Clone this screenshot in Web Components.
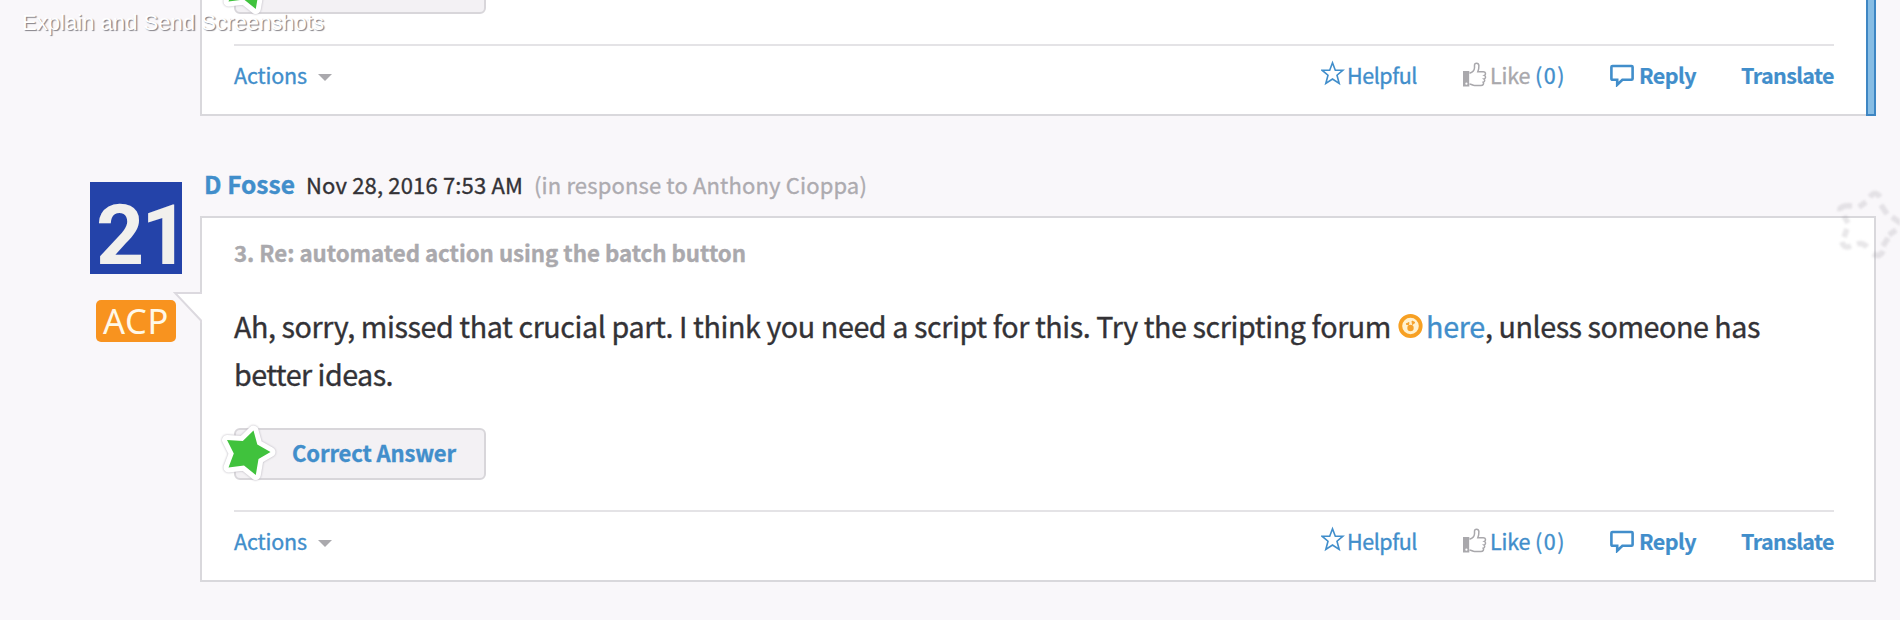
<!DOCTYPE html>
<html lang="en"><head><meta charset="utf-8"><title>Discussion</title>
<style>
html,body{margin:0;height:620px;overflow:hidden;background:#f9f7fa}
body{font-family:"Noto Sans CJK SC","Noto Sans",sans-serif;color:#333236}
</style></head><body>
<discussion-page></discussion-page>
<script>
const define=(name,html,init)=>customElements.define(name,class extends HTMLElement{
  connectedCallback(){
    if(this.shadowRoot)return;
    const t=document.createElement('template');t.innerHTML=html;
    this.attachShadow({mode:'open'}).append(t.content.cloneNode(true));
    if(init)init(this,this.shadowRoot);
  }
});

/* one line of text tracked to fill a given width */
define('tracked-text',`<style>:host{display:inline-block;white-space:pre;-webkit-text-stroke:var(--weight,.35px)}span{display:inline-block}</style><span><slot></slot></span>`,(el,root)=>{
  const s=root.querySelector('span'),w=+el.getAttribute('width');
  const n=el.textContent.length,nat=s.getBoundingClientRect().width;
  s.style.letterSpacing=((w-nat)/n)+'px';
  el.style.width=w+'px';
});

define('icon-star',`<style>:host{display:block;width:24px;height:26px}svg{display:block}</style>
<svg width="24" height="26" viewBox="0 0 24 26" fill="none" stroke="#418ecb" stroke-width="1.6"><path d="M11.5 2.8 14.3 10.2H22L16 15.2 18.2 23.5 11.5 19 4.8 23.5 7 15.2 1 10.2H8.7Z"/></svg>`);
define('icon-thumb',`<style>:host{display:block;width:24px;height:26px}svg{display:block}</style>
<svg width="24" height="26" viewBox="0 0 24 26"><path d="M0 10H6.3V25.5H0Z" fill="#a9a8ac"/><circle cx="3.4" cy="22.7" r="1.1" fill="#fff"/><path d="M6.5 12.3C9 11.5 11.3 9.3 11.5 7V4.2C11.6 1.6 15.6 1.4 15.9 4.6 16 7 15.5 8.8 14.8 10.7H20.3C22.8 10.7 23.3 13.6 21.3 14.4 23.3 15.2 22.7 17.8 20.9 18 22.3 19 21.7 21 20.2 21.3 21.2 22.8 20 24.5 18 24.5H11.5C9.5 24.5 8.5 23 6.5 23" fill="#fff" stroke="#a9a8ac" stroke-width="1.5"/></svg>`);
define('icon-reply',`<style>:host{display:block;width:24px;height:26px}svg{display:block}</style>
<svg width="24" height="26" viewBox="0 0 24 26"><path d="M2.5 5H21.5Q22.6 5 22.6 6.1V17.7Q22.6 18.8 21.5 18.8H12.4L7.2 23.8V18.8H2.5Q1.4 18.8 1.4 17.7V6.1Q1.4 5 2.5 5Z" fill="none" stroke="#418ecb" stroke-width="2.6"/></svg>`);
define('icon-forum',`<style>:host{display:inline-block;width:25px;height:28px;vertical-align:-4px}svg{display:block}</style>
<svg width="25" height="28" viewBox="0 0 25 28"><circle cx="12.5" cy="14" r="10.2" fill="#fff1cf" stroke="#f7a023" stroke-width="3.8"/><circle cx="12.5" cy="16" r="3.2" fill="#f5a12b"/><path d="M8 12 11 10.5 10.5 13ZM14 9 17 10.5 14.5 12.5Z" fill="#f5a12b" stroke="#f5a12b"/></svg>`);
define('correct-star',`<style>:host{display:block;width:64px;height:70px}svg{display:block;filter:drop-shadow(0 0 1.2px #b5b1ba)}</style>
<svg width="64" height="70" viewBox="0 0 64 70"><path d="M37.5 14.5 41.3 28.5 54.5 36 42.5 43 39.8 59 28 49.5 12.5 51.5 17.8 37.5 11 24 26.8 25Z" fill="#40c23d" stroke="#fff" stroke-width="10" stroke-linejoin="round" paint-order="stroke"/></svg>`);
define('ghost-star',`<style>:host{display:block;width:70px;height:80px}svg{display:block;filter:blur(.8px)}</style>
<svg width="70" height="80" viewBox="0 0 70 80"><path d="M10 26Q9 20 22 21M29 22 36 17M40 12Q45 5 50 12M51 20 57 29M62 32 72 39M66 45 59 50M58 53 53 61M53 66Q50 73 43 69M37 62Q33 57 27 59M21 61Q14 64 12 57M14 52 17 44M18 38 14 31" fill="none" stroke="#a09ca5" stroke-opacity=".24" stroke-width="5.5"/></svg>`);

define('correct-button',`<style>
:host{display:flex;box-sizing:border-box;position:relative;width:252px;height:52px;border:2px solid #d8d6da;border-radius:6px;background:#f3f1f4;padding-left:56px;font:700 22px/44px "Noto Sans CJK SC",sans-serif;color:#418ecb}
correct-star{position:absolute;left:-20px;top:-14px}</style>
<correct-star></correct-star><slot></slot>`);

define('action-bar',`<style>
:host{display:flex;border-top:2px solid #e4e3e6;height:68px;color:#418ecb;font-size:21.5px;line-height:32px;box-sizing:border-box;padding-top:13px;align-items:flex-start}
.g{display:flex}b{font-weight:700;--weight:.2px}
.caret{width:0;height:0;border:7px solid transparent;border-top:7px solid #aaa9ad;border-bottom:0;margin:15px 0 0 11px}
.sp{flex:1}icon-star,icon-thumb,icon-reply{margin-top:2px}
.h{width:97px;margin-right:45px}.l{width:102px;margin-right:45px}.r{width:87px;margin-right:44px}
icon-star{margin:1px 2px 0 0}icon-thumb{margin-right:3px}icon-reply{margin-right:5px}
:host([muted]) .lk{color:#a9a8ac}
</style><tracked-text width="73">Actions</tracked-text><i class="caret"></i><span class="sp"></span>
<div class="g h"><icon-star></icon-star><tracked-text width="70">Helpful</tracked-text></div>
<div class="g l"><icon-thumb></icon-thumb><tracked-text width="45" class="lk">Like </tracked-text><tracked-text width="31">(0)</tracked-text></div>
<div class="g r"><icon-reply></icon-reply><b><tracked-text width="57">Reply</tracked-text></b></div>
<b><tracked-text width="93">Translate</tracked-text></b>`);

define('message-card',`<style>
:host{display:flex;flex-direction:column;box-sizing:border-box;position:relative;background:#fff;border:2px solid #d9d8dc;width:1676px;padding:0 40px 0 32px}
</style><slot></slot>`);
define('author-badge',`<style>
:host{display:flex;flex-direction:column;align-items:center;width:92px}
.a{width:92px;height:92px;background:#2443a9;color:#f1f0ed;font:700 84px/92px Roboto,sans-serif;box-sizing:border-box;padding:8px 0 0 6px;white-space:nowrap;letter-spacing:-3px}
.p{width:80px;height:42px;margin-top:26px;border-radius:5px;background:#f8931f;color:#fff8e8;font:34.5px/41px "Noto Sans",sans-serif;text-align:center;--weight:0}
</style><div class="a">21</div><div class="p"><tracked-text width="66">ACP</tracked-text></div>`);

define('discussion-page',`<style>
:host{display:block;position:relative;width:1900px;height:620px;overflow:hidden}
.first{margin-left:200px;height:116px;border-top:0}
.first .btn{height:44px;flex:none;display:flex;align-items:flex-start}.first correct-button{margin-top:-38px}
.bar{position:absolute;right:-2px;top:0;width:6px;height:114px;border:2px solid #3e86c3;border-top:0;background:#87bde4}
.post{display:grid;grid-template-columns:92px 1676px;column-gap:18px;margin-left:90px;margin-top:44px}
author-badge{margin-top:22px}
header{display:flex;height:56px;align-items:baseline;padding-left:4px;box-sizing:border-box;line-height:48px}
.name{font-size:24.5px;font-weight:700;color:#418ecb;margin-right:11px}
.date{font-size:22px;margin-right:11px}.resp{font-size:22px;color:#adabb0}
.main{height:366px}.tail{position:absolute;left:-29px;top:74px}
.title{font-size:22.3px;font-weight:700;line-height:32px;color:#aaa9ad;margin-top:18px}
.text{font-size:28.7px;line-height:48px;margin-top:34px;height:96px;color:#333236}
.text div{display:flex;height:48px}.text icon-forum{margin:10px 3px 0 7px}.lnk{color:#418ecb}
.main correct-button{margin-top:30px}.main action-bar{margin-top:30px}
ghost-star{position:absolute;left:1830px;top:185px}
.mark{position:absolute;left:22px;top:10px;font:22px/26px "Liberation Sans",sans-serif;color:#fff;text-shadow:1.3px 1.3px 1px #838187;--weight:0}
</style>
<message-card class="first"><div class="btn"><correct-button></correct-button></div><action-bar muted></action-bar><i class="bar"></i></message-card>
<section class="post"><author-badge></author-badge><div>
<header><tracked-text class="name" width="91">D Fosse</tracked-text><tracked-text class="date" width="217">Nov 28, 2016 7:53 AM</tracked-text><tracked-text class="resp" width="333">(in response to Anthony Cioppa)</tracked-text></header>
<message-card class="main">
<svg class="tail" width="30" height="31" viewBox="0 0 30 31"><path d="M29 1H2L28 28.5V31H30V1Z" fill="#fff"/><path d="M29 1H2L28 28.5V31" fill="none" stroke="#dcd9df" stroke-width="2"/></svg>
<div class="title"><tracked-text width="512">3. Re: automated action using the batch button</tracked-text></div>
<div class="text"><div><tracked-text width="1157">Ah, sorry, missed that crucial part. I think you need a script for this. Try the scripting forum</tracked-text><icon-forum></icon-forum><tracked-text class="lnk" width="59">here</tracked-text><tracked-text width="275">, unless someone has</tracked-text></div><div><tracked-text width="159">better ideas.</tracked-text></div></div>
<correct-button><tracked-text width="164">Correct Answer</tracked-text></correct-button><action-bar></action-bar>
</message-card></div></section>
<ghost-star></ghost-star>
<div class="mark"><tracked-text width="302">Explain and Send Screenshots</tracked-text></div>`);
</script></body></html>
